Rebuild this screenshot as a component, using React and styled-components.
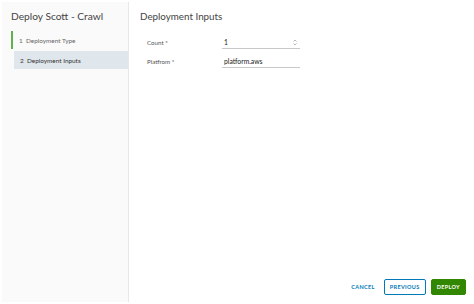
import styled, { createGlobalStyle } from 'styled-components';

const Global = createGlobalStyle`
  html, body { margin: 0; padding: 0; background: #fff; }
  body { font-family: Lato, "Noto Sans", sans-serif; color: #333; }
`;

const Modal = styled.div`
  width: 474px;
  height: 304px;
  display: flex;
  box-sizing: border-box;
  padding: 2px 0 2px 2px;
`;

const Side = styled.div`
  width: 126px;
  background: #fafafa;
  border-right: 1px solid #e8e8e8;
  display: flex;
  flex-direction: column;
`;

const Title = styled.h2`
  margin: 0;
  padding: 8px 0 0 9px;
  font-size: 10.2px;
  font-weight: 400;
  color: #444;
  line-height: 12px;
`;

const Steps = styled.div`
  margin-top: 9px;
  padding-left: 9px;
  display: flex;
  flex-direction: column;
  gap: 2px;
`;

const Step = styled.div`
  height: 18px;
  display: flex;
  align-items: center;
  padding-left: 6px;
  margin-left: ${p => (p.done ? '0' : '3px')};
  font-size: 6.4px;
  color: ${p => (p.active ? '#333' : '#666')};
  background: ${p => (p.active ? '#dfe6ec' : 'transparent')};
  border-left: ${p => (p.done ? '2px solid #5eb14b' : 'none')};
`;

const Main = styled.div`
  flex: 1;
  display: flex;
  flex-direction: column;
  padding: 8px 8px 7px 11px;
`;

const Heading = styled.h3`
  margin: 0;
  font-size: 9.8px;
  font-weight: 400;
  color: #444;
  line-height: 12px;
`;

const Form = styled.div`
  margin-top: 14px;
  padding-left: 7px;
  display: flex;
  flex-direction: column;
  gap: 6px;
`;

const Row = styled.div`
  display: grid;
  grid-template-columns: 75px 78px;
  align-items: center;
  height: 13px;
`;

const Label = styled.span`
  font-size: 6.2px;
  color: #555;
`;

const Input = styled.div`
  height: 12px;
  border-bottom: 1px solid #c8c8c8;
  display: flex;
  align-items: center;
  justify-content: space-between;
  padding-left: 2px;
  font-size: 6.8px;
  color: #222;
`;

const Spin = styled.svg`
  width: 4px;
  height: 7px;
  margin-right: 3px;
`;

const Footer = styled.div`
  margin-top: auto;
  display: flex;
  justify-content: flex-end;
  align-items: center;
  gap: 5px;
`;

const Button = styled.button`
  height: 16px;
  box-sizing: border-box;
  padding: 0 ${p => (p.link ? '3px' : '5px')};
  font-family: inherit;
  font-size: 5.5px;
  font-weight: 700;
  letter-spacing: 0.35px;
  border-radius: 2px;
  border: 1px solid ${p => (p.primary ? '#318700' : p.outline ? '#0079b8' : 'transparent')};
  background: ${p => (p.primary ? '#318700' : '#fff')};
  color: ${p => (p.primary ? '#fff' : '#0079b8')};
`;

export default function App() {
  return (
    <>
      <Global />
      <Modal>
        <Side>
          <Title>Deploy Scott - Crawl</Title>
          <Steps>
            <Step done>1&nbsp; Deployment Type</Step>
            <Step active>2&nbsp; Deployment Inputs</Step>
          </Steps>
        </Side>
        <Main>
          <Heading>Deployment Inputs</Heading>
          <Form>
            <Row>
              <Label>Count *</Label>
              <Input>
                1
                <Spin viewBox="0 0 4 7">
                  <path d="M0.5 2.5 L2 1 L3.5 2.5 M0.5 4.5 L2 6 L3.5 4.5" fill="none" stroke="#999" strokeWidth="0.7" />
                </Spin>
              </Input>
            </Row>
            <Row>
              <Label>Platfrom *</Label>
              <Input>platform.aws</Input>
            </Row>
          </Form>
          <Footer>
            <Button link>CANCEL</Button>
            <Button outline>PREVIOUS</Button>
            <Button primary>DEPLOY</Button>
          </Footer>
        </Main>
      </Modal>
    </>
  );
}
